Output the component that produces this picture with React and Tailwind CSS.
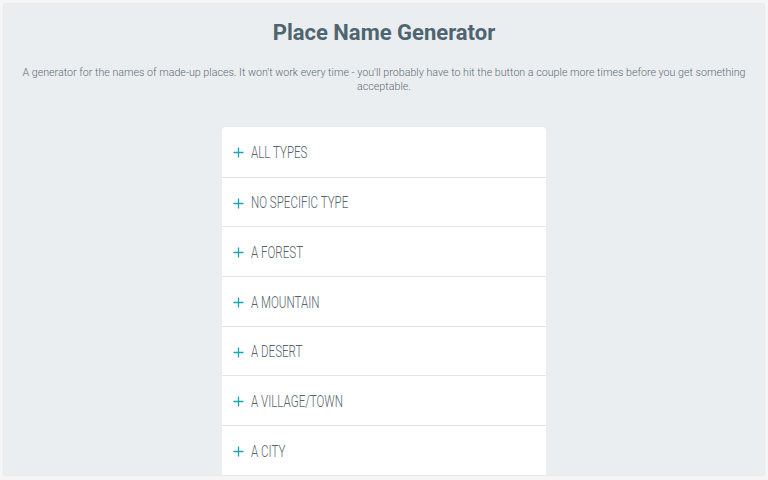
const types = [
  "All Types",
  "No Specific Type",
  "A Forest",
  "A Mountain",
  "A Desert",
  "A Village/Town",
  "A City",
];

const PlusIcon = () => (
  <svg width="11" height="11" viewBox="0 0 11 11" className="shrink-0">
    <path d="M5.5 0.5v10M0.5 5.5h10" stroke="#1ba3b8" strokeWidth="1.3" />
  </svg>
);

const App = () => {
  return (
    <div className="min-h-[480px] bg-[#f6f6f6] p-1 font-['Roboto',sans-serif]">
      <div className="h-[471px] overflow-hidden bg-[#ebeef1] shadow-[0_0_2px_rgba(0,0,0,0.15)]">
        <h1 className="pt-[15px] text-center text-[22px] font-bold leading-[28px] text-[#4e6570]">
          Place Name Generator
        </h1>
        <p className="mx-auto mt-[19px] px-2 text-center text-[10.7px] font-light leading-[14px] text-[#5f6d74]">
          A generator for the names of made-up places. It won't work every time - you'll probably have to hit the button a couple more times before you get something acceptable.
        </p>
        <div className="mx-auto mt-[33px] w-[324px] rounded-t-[4px] bg-white">
          {types.map((t, i) => (
            <div
              key={t}
              className={`flex h-[49.7px] items-center gap-[7px] px-[11px] pt-[2px] ${
                i > 0 ? "border-t border-[#e2e4e6]" : ""
              }`}
            >
              <PlusIcon />
              <span className="inline-block origin-left scale-x-[0.68] whitespace-nowrap text-[17px] font-light uppercase text-[#55646b]">
                {t}
              </span>
            </div>
          ))}
        </div>
      </div>
    </div>
  );
};

export default App;
